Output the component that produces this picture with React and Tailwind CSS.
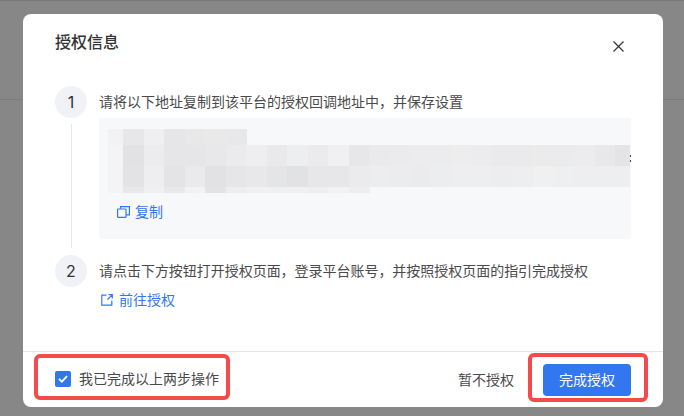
const FONT = "font-['Inter','Noto_Sans_CJK_SC',sans-serif]";
const X0 = 123, S = 20.5;
const rows = [
  { y: 129, h: 16, first: '#f2f2f4', cols: ['#e7e7e9','#efeff1','#e6e6e8','#e8e8e9','#e9e9e9','#e8e8ea'] },
  { y: 145, h: 21, first: '#f4f4f6', cols: ['#e2e2e4','#ececee','#e6e6e8','#e6e6e8','#e8e8ea','#ebebed','#eeeef0','#e9e9eb','#edeef0','#ebebed','#f0f0f2','#e7e7e9','#eaeaec','#ebebed','#ececee','#ececee','#ededed','#ececee','#eaeaec','#eaeaec','#ebebec','#ebebed','#ececee','#e8e8ea','#e4e4e6','#e8e8ea','#e8e8ea','#eaeaea','#ebebed','#e5e5e7','#e9e9eb'] },
  { y: 166, h: 21, first: '#f4f4f6', cols: ['#e3e3e5','#eeeef0','#e4e4e6','#eaeaec','#e2e2e4','#e6e6e6','#e8e8e8','#e5e5e5','#e2e2e4','#e7e7e9','#e7e7e9','#ebebed','#ededef','#ececee','#ebebed','#ecedef','#eeeef0','#eeeeef','#ededee','#eeeeee','#f0f0f1','#eeeff0','#eeeef0','#eeeef0','#eeeef0','#ececee','#ebebed','#eeeef0','#ececee'] },
  { y: 187, h: 6, first: '#f4f4f6', cols: ['#e8e8e8','#f0f0f2','#e8e8ea','#f2f2f2','#e4e4e6','#ededef','#f0f0f2','#eff0f2','#f0f0f2','#eeeef0','#f2f2f4','#eeeef0'] },
];
function Mosaic() {
  return (
    <svg width="532" height="84" viewBox="99 118 532 84" className="block" shapeRendering="crispEdges">
      {rows.map((r) => (
        <g key={r.y}>
          <rect x="108" y={r.y} width="15" height={r.h} fill={r.first} />
          {r.cols.map((c, i) => (
            <rect key={i} x={X0 + i * S} y={r.y} width={Math.min(S + 0.5, 630 - X0 - i * S)} height={r.h} fill={c} />
          ))}
        </g>
      ))}
      <rect x="630" y="155" width="1" height="1.5" fill="#444" />
      <rect x="630" y="160" width="1" height="1.5" fill="#444" />
    </svg>
  );
}
function Circle({ n }) {
  return <div className="w-8 h-8 shrink-0 rounded-full bg-[#f1f2f7] flex items-center justify-center text-[16px] text-[#333]">{n}</div>;
}
export default function App() {
  return (
    <div className={`relative w-[684px] h-[416px] overflow-hidden bg-[#878787] pt-[14px] pl-[23px] ${FONT}`}>
      <div className="absolute left-0 right-0 top-0 h-px bg-[#777]" />
      <div className="absolute left-0 right-0 top-[99px] h-px bg-[#7c7c7c]" />
      <div className="relative w-[640px] h-[393px] bg-white rounded-lg flex flex-col">
        <div className="flex justify-between pl-8 pr-[38px] pt-4 h-[72px]">
          <h2 className="text-[16px] leading-6 font-medium text-[#333]">授权信息</h2>
          <svg width="11" height="11" viewBox="0 0 11 11" className="mt-[11px] mr-[1px]" fill="none" stroke="#333" strokeWidth="1.2"><path d="M0.5 0.5 10.5 10.5M10.5 0.5 0.5 10.5" /></svg>
        </div>
        <div className="flex-1 pl-8 pr-8">
          <div className="flex gap-3 h-[169px]">
            <div className="flex flex-col items-center w-8 shrink-0">
              <Circle n="1" />
              <div className="w-px h-[124px] mt-[6px] bg-[#e6e7ec]" />
            </div>
            <div className="flex-1 min-w-0">
              <p className="text-[14px] leading-8 text-[#4a4a4a]">请将以下地址复制到该平台的授权回调地址中，并保存设置</p>
              <div className="h-[121px] bg-[#f7f8fa] rounded-b overflow-hidden">
                <Mosaic />
                <div className="flex items-center gap-[5px] pl-[18px] text-[14px] leading-5 text-[#3277f0]">
                  <svg width="13" height="12" viewBox="0 0 13 12" fill="none" stroke="#3277f0" strokeWidth="1.2"><rect x="0.6" y="3" width="8.4" height="8.4" rx="0.6" /><path d="M3.6 2.8V0.6h8.8v8.2H9.2" /></svg>
                  <span>复制</span>
                </div>
              </div>
            </div>
          </div>
          <div className="flex gap-3">
            <Circle n="2" />
            <div>
              <p className="text-[14px] leading-8 text-[#4a4a4a] tracking-[-0.03px]">请点击下方按钮打开授权页面，登录平台账号，并按照授权页面的指引完成授权</p>
              <div className="flex items-center gap-[6px] pl-[2px] mt-[3px] text-[14px] leading-5 text-[#3277f0]">
                <svg width="12" height="12" viewBox="0 0 12 12" fill="none" stroke="#3277f0" strokeWidth="1.2"><path d="M5.5 1.2H0.8v10h10V6.5M6.5 5.5 11.2 0.8M7.5 0.7h3.8v3.8" /></svg>
                <span>前往授权</span>
              </div>
            </div>
          </div>
        </div>
        <div className="h-[56px] border-t border-[#e3e4ee] flex items-center justify-between pl-8 pr-8">
          <label className="flex items-center gap-2 text-[14px] text-[#4a4a4a] mb-[2px]">
            <span className="w-4 h-4 rounded-[2px] bg-[#3277f0] flex items-center justify-center">
              <svg width="10" height="8" viewBox="0 0 10 8" fill="none" stroke="#fff" strokeWidth="1.8"><path d="M1 3.8 3.9 6.6 9 1.2" /></svg>
            </span>
            我已完成以上两步操作
          </label>
          <div className="flex items-center gap-[29px]">
            <span className="text-[14px] text-[#4a4a4a]">暂不授权</span>
            <button className="w-[88px] h-8 rounded bg-[#3277f0] text-white text-[14px]">完成授权</button>
          </div>
        </div>
        <div className="absolute left-[11px] top-[340px] w-[196px] h-[46px] border-4 border-[#f34a4a] rounded-md" />
        <div className="absolute left-[505px] top-[339px] w-[120px] h-[49px] border-4 border-[#f34a4a] rounded-md" />
      </div>
    </div>
  );
}
